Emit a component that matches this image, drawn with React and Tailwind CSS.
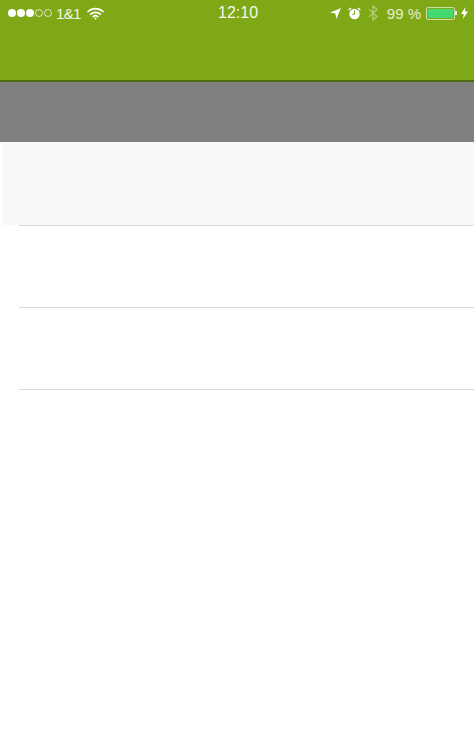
const StatusBar = () => (
  <div className="flex items-center justify-between h-[26px] pl-[8px] pr-[6px] text-white font-['Liberation_Sans',Arial,sans-serif]">
    {/* Left: signal, carrier, wifi */}
    <div className="flex flex-1 items-center">
      <div className="flex gap-[1px]">
        <span className="w-[8px] h-[8px] rounded-full bg-white"></span>
        <span className="w-[8px] h-[8px] rounded-full bg-white"></span>
        <span className="w-[8px] h-[8px] rounded-full bg-white"></span>
        <span className="w-[8px] h-[8px] rounded-full border border-white/70"></span>
        <span className="w-[8px] h-[8px] rounded-full border border-white/70"></span>
      </div>
      <span className="ml-[4px] text-[15px] leading-none tracking-[-0.7px] text-white/90">1&amp;1</span>
      <svg className="ml-[6px]" width="17" height="13" viewBox="0 0 17 13" fill="none" stroke="white" strokeLinecap="round">
        <path d="M1 4.5a11 11 0 0 1 15 0" strokeWidth="1.7" />
        <path d="M3.6 7.2a7.2 7.2 0 0 1 9.8 0" strokeWidth="1.7" />
        <path d="M6.2 9.6a3.4 3.4 0 0 1 4.6 0" strokeWidth="1.6" />
        <circle cx="8.5" cy="11.6" r="1" fill="white" stroke="none" />
      </svg>
    </div>

    <span className="text-[16px] leading-none text-white/95">12:10</span>

    {/* Right: location, alarm, bluetooth, battery */}
    <div className="flex flex-1 items-center justify-end">
      <svg width="11" height="11" viewBox="0 0 11 11" fill="white">
        <path d="M11 0 0 4.8l5.4.8.9 5.4z" />
      </svg>
      <svg className="ml-[7px]" width="13" height="13" viewBox="0 0 13 13">
        <circle cx="6.5" cy="7" r="5.2" fill="white" />
        <path d="M6.5 3.6V7.4H4.2" fill="none" stroke="#7fa817" strokeWidth="1" />
        <path d="M.6 3 3 .9M12.4 3 10 .9" stroke="white" strokeWidth="1.3" />
      </svg>
      <svg className="ml-[7px] opacity-40" width="10" height="16" viewBox="0 0 10 16" fill="none" stroke="white" strokeWidth="1.3">
        <path d="M1 4.2 9 11.4 5 15V1L9 4.6 1 11.8" />
      </svg>
      <span className="ml-[9px] text-[15px] leading-none text-white/80">99 %</span>
      <div className="ml-[5px] flex items-center">
        <div className="w-[29px] h-[13px] border border-white/60 rounded-[2px] p-[1px]">
          <div className="h-full bg-[#44d870] rounded-[1px]"></div>
        </div>
        <span className="w-[2px] h-[4px] bg-white/80"></span>
      </div>
      <svg className="ml-[4px]" width="7" height="12" viewBox="0 0 7 12" fill="white">
        <path d="M4.4 0 0 7h2.8L2 12l5-7.4H4z" />
      </svg>
    </div>
  </div>
);

const App = () => {
  return (
    <div className="w-[474px] h-[751px] bg-white overflow-hidden">
      {/* Green header */}
      <div className="h-[82px] bg-[#7fa817] border-b-2 border-[#4f6b14]">
        <StatusBar />
      </div>

      {/* Gray band */}
      <div className="h-[60px] bg-[#808080]"></div>

      {/* Rows */}
      <div className="h-[83px] ml-[2px] bg-[#f8f8f8]"></div>
      <div className="ml-[19px]">
        <div className="h-[82px] border-t border-[#d9d9d9]"></div>
        <div className="h-[82px] border-t border-[#d9d9d9]"></div>
        <div className="border-t border-[#d9d9d9]"></div>
      </div>
    </div>
  );
};

export default App;
